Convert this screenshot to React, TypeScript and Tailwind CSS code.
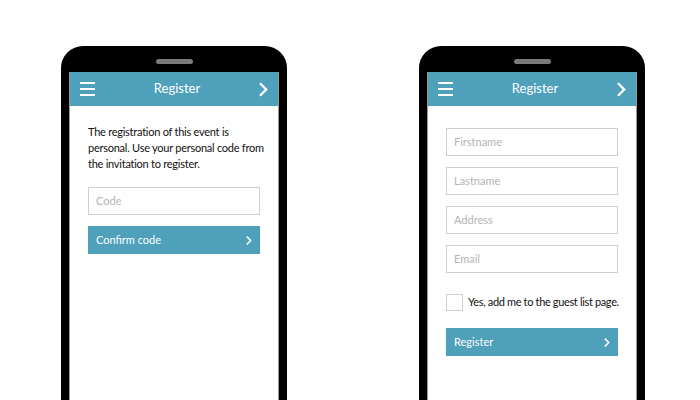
import React from "react"

const font = { fontFamily: 'Lato, "Noto Sans", sans-serif' }

function Chevron({ className }: { className?: string }) {
  return (
    <svg viewBox="0 0 10 16" className={className} fill="none" stroke="currentColor" strokeWidth={2.6} strokeLinecap="square">
      <path d="M2 2 L8 8 L2 14" />
    </svg>
  )
}

function Phone({ children }: { children: React.ReactNode }) {
  return (
    <div className="w-[226px] h-[400px] shrink-0 rounded-t-[22px] bg-black px-[8px] pt-[13px] flex flex-col">
      <div className="mx-auto w-[37px] h-[5px] rounded-full bg-[#7a7a7a]" />
      <div className="mt-[8px] flex-1 bg-white border-x border-[#9a9a9a] flex flex-col">
        {/* Header */}
        <div className="h-[34px] bg-[#4fa0ba] flex items-center justify-between px-[10px] text-white">
          <div className="flex flex-col gap-[4px] w-[15px]">
            <span className="h-[2px] bg-white" />
            <span className="h-[2px] bg-white" />
            <span className="h-[2px] bg-white" />
          </div>
          <span className="text-[13px]">Register</span>
          <Chevron className="w-[9px] h-[15px]" />
        </div>
        {children}
      </div>
    </div>
  )
}

function Field({ placeholder }: { placeholder: string }) {
  return (
    <div className="h-[28px] border-[1.5px] border-[#cfcfcf] flex items-center px-[7px] text-[11px] text-[#b4b4b4]">
      {placeholder}
    </div>
  )
}

function ActionButton({ label }: { label: string }) {
  return (
    <div className="h-[28px] bg-[#4fa0ba] flex items-center justify-between px-[8px] text-white text-[11px]">
      <span>{label}</span>
      <Chevron className="w-[6px] h-[9px]" />
    </div>
  )
}

export default function App() {
  return (
    <div className="w-[700px] h-[400px] overflow-hidden bg-white flex gap-[132px] pl-[61px] pt-[46px]" style={font}>
      <Phone>
        <div className="px-[18px] pt-[18px] flex flex-col">
          <p className="text-[11px] leading-[16px] tracking-[-0.25px] text-[#111] whitespace-nowrap">
            The registration of this event is
            <br />
            personal. Use your personal code from
            <br />
            the invitation to register.
          </p>
          <div className="mt-[15px] flex flex-col gap-[11px]">
            <Field placeholder="Code" />
            <ActionButton label="Confirm code" />
          </div>
        </div>
      </Phone>

      <Phone>
        <div className="px-[18px] pt-[22px] flex flex-col">
          <div className="flex flex-col gap-[11px]">
            <Field placeholder="Firstname" />
            <Field placeholder="Lastname" />
            <Field placeholder="Address" />
            <Field placeholder="Email" />
          </div>
          <div className="mt-[21px] flex items-center gap-[5px]">
            <div className="w-[17px] h-[17px] shrink-0 border-[1.5px] border-[#cfcfcf]" />
            <span className="text-[11px] tracking-[-0.35px] text-[#111] whitespace-nowrap">Yes, add me to the guest list page.</span>
          </div>
          <div className="mt-[17px]">
            <ActionButton label="Register" />
          </div>
        </div>
      </Phone>
    </div>
  )
}
